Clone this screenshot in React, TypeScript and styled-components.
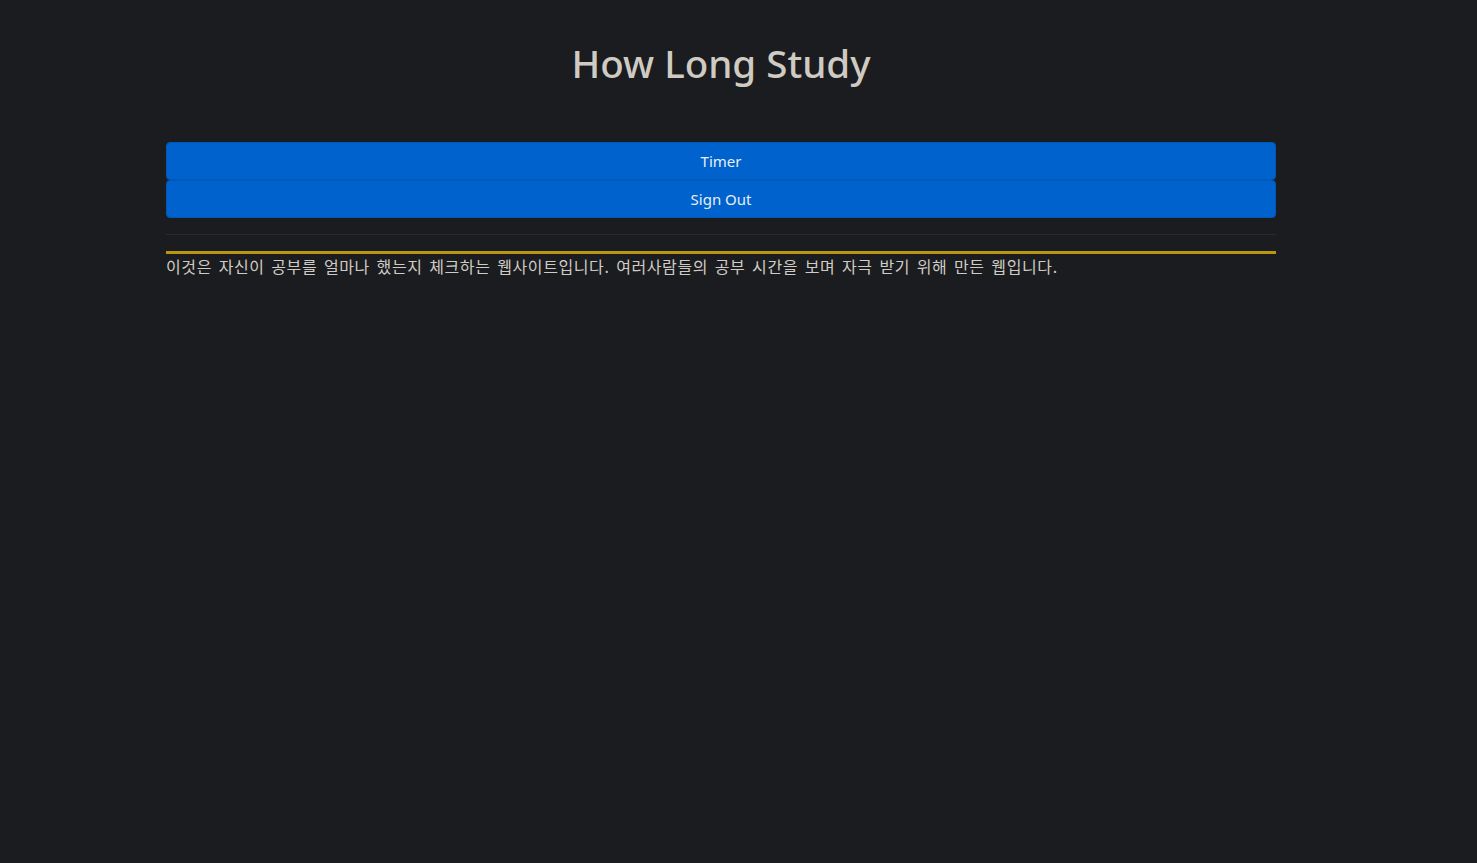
import React from 'react';
import styled, { createGlobalStyle } from 'styled-components';

const GlobalStyle = createGlobalStyle`
    html, body {
        margin: 0;
        padding: 0;
        background: #1b1c1f;
        color: #d0ccc5;
        font-family: "Noto Sans", "Noto Sans CJK KR", sans-serif;
        font-size: 16px;
        line-height: 1.5;
    }
    #root {
        min-height: 100vh;
    }
`;

const Page = styled.div`
    min-height: 100vh;
    background: #1b1c1f;
    padding-left: 166px;
`;

const Container = styled.div`
    width: 1110px;
    display: flex;
    flex-direction: column;
`;

const Title = styled.h1`
    margin: 38px 0 54px;
    text-align: center;
    font-size: 38.5px;
    font-weight: 500;
    line-height: 50px;
    color: #cfcac2;
`;

const ButtonGroup = styled.div`
    display: flex;
    flex-direction: column;
`;

const Button = styled.button`
    display: block;
    width: 100%;
    height: 38px;
    padding: 0 12px;
    border: 1px solid #0058b8;
    border-radius: 4px;
    background: #0062cc;
    color: #e8eef6;
    font-family: "Noto Sans", "Noto Sans CJK KR", sans-serif;
    font-size: 15px;
    line-height: 24px;
    cursor: pointer;
`;

const Divider = styled.hr`
    margin: 16px 0 0;
    border: 0;
    border-top: 1px solid #2a2b2e;
`;

const Accent = styled.div`
    margin-top: 16px;
    height: 3px;
    background: #b8970a;
`;

const Description = styled.p`
    margin: 0;
    font-family: "Noto Sans CJK KR", "Noto Sans", sans-serif;
    font-size: 16px;
    line-height: 24px;
    letter-spacing: 0.6px;
    word-spacing: 2.5px;
    color: #d0ccc5;
`;

export default function App() {
    return (
        <Page>
            <GlobalStyle />
            <Container>
                <Title>How Long Study</Title>
                <ButtonGroup>
                    <Button>Timer</Button>
                    <Button>Sign Out</Button>
                </ButtonGroup>
                <Divider />
                <Accent />
                <Description>
                    이것은 자신이 공부를 얼마나 했는지 체크하는 웹사이트입니다. 여러사람들의 공부 시간을 보며 자극 받기 위해 만든 웹입니다.
                </Description>
            </Container>
        </Page>
    );
}
